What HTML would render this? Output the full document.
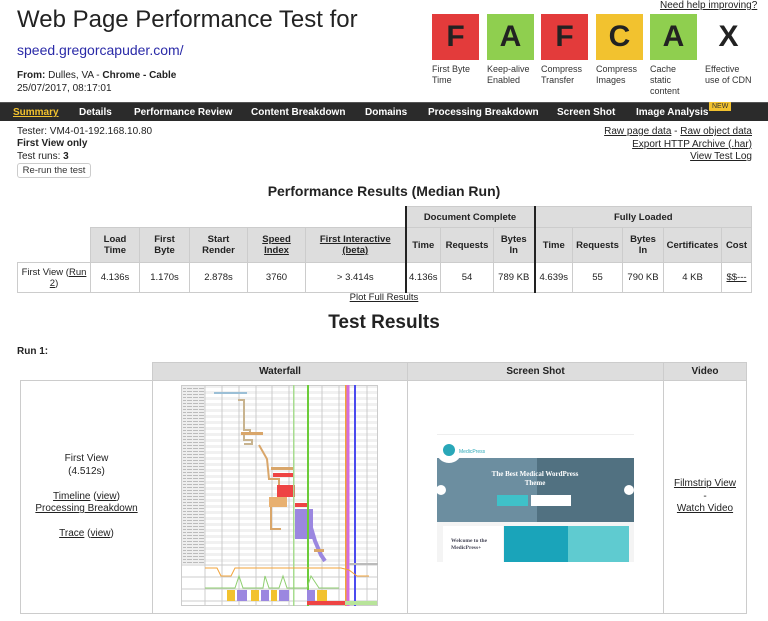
<!DOCTYPE html>
<html><head><meta charset="utf-8"><style>
*{margin:0;padding:0;box-sizing:border-box}
body{width:768px;height:621px;background:#fff;font-family:"Liberation Sans",Arial,sans-serif;color:#222;position:relative;overflow:hidden;font-size:10px}
.a{position:absolute;white-space:nowrap}
u{text-decoration:underline}
.g{position:absolute;top:14px;width:47px;height:46px;font:bold 30px "Liberation Sans",sans-serif;color:#222;text-align:center;line-height:46px}
.gl{position:absolute;top:64px;font-size:9px;line-height:11px;color:#333}
.nav{position:absolute;left:0;top:102px;width:768px;height:19px;background:#2b2b2b;border-top:1px solid #555}
.nav span{position:absolute;top:4px;color:#fff;font-weight:bold;font-size:10px}
table{border-collapse:collapse;position:absolute}
.pt td{border:1px solid #ccc;text-align:center;font-size:9.5px;padding:0}
.pt .h{background:#ddd;font-weight:bold}
.rt td{border:1px solid #ccc;text-align:center;font-size:10px}
</style></head><body>
<div class="a" style="left:17px;top:6px;font-size:24px;color:#222">Web Page Performance Test for</div>
<div class="a" style="left:17px;top:42px;font-size:14px;color:#2a2aa8">speed.gregorcapuder.com/</div>
<div class="a" style="left:17px;top:70px;font-size:10px"><b>From:</b> Dulles, VA - <b>Chrome - Cable</b></div>
<div class="a" style="left:17px;top:83px;font-size:10px">25/07/2017, 08:17:01</div>
<div class="a" style="left:660px;top:0px;font-size:10px"><u>Need help improving?</u></div>
<div class="g" style="left:432px;background:#e33b3b">F</div>
<div class="g" style="left:487px;background:#8fcf4f">A</div>
<div class="g" style="left:541px;background:#e33b3b">F</div>
<div class="g" style="left:596px;background:#f2c22f">C</div>
<div class="g" style="left:650px;background:#8fcf4f">A</div>
<div class="g" style="left:705px">X</div>
<div class="gl" style="left:432px">First Byte<br>Time</div>
<div class="gl" style="left:487px">Keep-alive<br>Enabled</div>
<div class="gl" style="left:541px">Compress<br>Transfer</div>
<div class="gl" style="left:596px">Compress<br>Images</div>
<div class="gl" style="left:650px">Cache<br>static<br>content</div>
<div class="gl" style="left:705px">Effective<br>use of CDN</div>
<div class="nav">
<span style="left:13px;color:#f2c22f;text-decoration:underline">Summary</span>
<span style="left:79px">Details</span>
<span style="left:134px">Performance Review</span>
<span style="left:251px">Content Breakdown</span>
<span style="left:365px">Domains</span>
<span style="left:428px">Processing Breakdown</span>
<span style="left:557px">Screen Shot</span>
<span style="left:636px">Image Analysis</span>
<span style="left:709px;top:-1px;background:#f2c22f;color:#333;font-size:7px;padding:1px 3px;font-weight:normal">NEW</span>
</div>
<div class="a" style="left:17px;top:126px;font-size:10px">Tester: VM4-01-192.168.10.80</div>
<div class="a" style="left:17px;top:138px;font-size:10px;font-weight:bold">First View only</div>
<div class="a" style="left:17px;top:151px;font-size:10px">Test runs: <b>3</b></div>
<div class="a" style="left:17px;top:163px;width:74px;height:15px;border:1px solid #ccc;border-radius:3px;font-size:9.5px;text-align:center;line-height:13px;color:#333">Re-run the test</div>
<div class="a" style="right:16px;top:126px;font-size:10px;text-align:right;line-height:12.5px"><u>Raw page data</u> - <u>Raw object data</u><br><u>Export HTTP Archive (.har)</u><br><u>View Test Log</u></div>
<div class="a" style="left:0;width:768px;top:183px;text-align:center;font-size:14px;font-weight:bold">Performance Results (Median Run)</div>
<table class="pt" style="left:17px;top:206px;width:735px">
<tr style="height:21px"><td colspan="6" style="border:none;border-right:2px solid #222"></td><td colspan="3" class="h" style="border-right:2px solid #222">Document Complete</td><td colspan="5" class="h">Fully Loaded</td></tr>
<tr style="height:35px"><td style="width:73px;border-left:none;border-top:none;background:#fff"></td><td class="h" style="width:49px">Load<br>Time</td><td class="h" style="width:50px">First<br>Byte</td><td class="h" style="width:58px">Start<br>Render</td><td class="h" style="width:58px"><u>Speed<br>Index</u></td><td class="h" style="width:100px;border-right:2px solid #222"><u>First Interactive<br>(beta)</u></td><td class="h" style="width:35px">Time</td><td class="h" style="width:53px">Requests</td><td class="h" style="width:41px;border-right:2px solid #222">Bytes<br>In</td><td class="h" style="width:38px">Time</td><td class="h" style="width:50px">Requests</td><td class="h" style="width:41px">Bytes<br>In</td><td class="h" style="width:58px">Certificates</td><td class="h">Cost</td></tr>
<tr style="height:30px"><td>First View (<u>Run<br>2</u>)</td><td>4.136s</td><td>1.170s</td><td>2.878s</td><td>3760</td><td style="border-right:2px solid #222">&gt; 3.414s</td><td>4.136s</td><td>54</td><td style="border-right:2px solid #222">789 KB</td><td>4.639s</td><td>55</td><td>790 KB</td><td>4 KB</td><td><u>$$---</u></td></tr>
</table>
<div class="a" style="left:0;width:768px;top:292px;text-align:center;font-size:9.5px"><u>Plot Full Results</u></div>
<div class="a" style="left:0;width:768px;top:312px;text-align:center;font-size:19px;font-weight:bold">Test Results</div>
<div class="a" style="left:17px;top:346px;font-size:10px;font-weight:bold">Run 1:</div>
<table class="rt" style="left:20px;top:362px;width:727px">
<tr style="height:18px"><td style="width:132px;border:none;border-bottom:1px solid #ccc"></td><td style="width:255px;background:#ddd;font-weight:bold">Waterfall</td><td style="width:256px;background:#ddd;font-weight:bold">Screen Shot</td><td style="background:#ddd;font-weight:bold">Video</td></tr>
<tr style="height:233px"><td style="line-height:12.5px">First View<br>(4.512s)<br><br><u>Timeline</u> (<u>view</u>)<br><u>Processing Breakdown</u><br><br><u>Trace</u> (<u>view</u>)</td><td></td><td></td><td style="line-height:12.5px"><u>Filmstrip View</u><br>-<br><u>Watch Video</u></td></tr>
</table>
<svg class="a" style="left:181px;top:385px" width="197" height="221" viewBox="0 0 197 221">
<defs><pattern id="rows" width="4" height="6" patternUnits="userSpaceOnUse"><rect width="4" height="3" fill="#f1f1f1"/></pattern>
<pattern id="txt" width="6" height="3" patternUnits="userSpaceOnUse"><rect width="5" height="1" fill="#bbb"/></pattern></defs>
<rect x="0.5" y="0.5" width="196" height="220" fill="#fff" stroke="#ccc"/>
<rect x="24" y="1" width="172" height="178" fill="url(#rows)"/>
<rect x="1" y="1" width="23" height="178" fill="#eee"/>
<rect x="2" y="2" width="21" height="176" fill="url(#txt)"/>
<g stroke="#ccc"><line x1="24" y1="0" x2="24" y2="221"/><line x1="41" y1="0" x2="41" y2="221"/><line x1="58" y1="0" x2="58" y2="221"/><line x1="75" y1="0" x2="75" y2="221"/><line x1="91" y1="0" x2="91" y2="221"/><line x1="108" y1="0" x2="108" y2="221"/><line x1="141" y1="0" x2="141" y2="221"/><line x1="158" y1="0" x2="158" y2="221"/><line x1="186" y1="0" x2="186" y2="221"/>
<line x1="0" y1="180" x2="197" y2="180"/><line x1="0" y1="192" x2="197" y2="192"/><line x1="0" y1="204" x2="197" y2="204"/><line x1="0" y1="216" x2="197" y2="216"/></g>
<rect x="33" y="7" width="33" height="2" fill="#9bbfd6"/>
<path d="M57 15h6v30h6v4h-6v6h8v4h-8" stroke="#c8b38e" stroke-width="2" fill="none"/>
<rect x="60" y="47" width="22" height="3" fill="#d9a66a"/>
<path d="M78 60l8 14 2 20h10v20h-8v30h10" stroke="#d9a66a" stroke-width="2" fill="none"/>
<rect x="90" y="82" width="23" height="3" fill="#d9a66a"/>
<rect x="92" y="88" width="21" height="4" fill="#e44"/>
<rect x="96" y="100" width="18" height="12" fill="#e44"/>
<rect x="88" y="112" width="18" height="10" fill="#e8b070"/>
<rect x="114" y="118" width="12" height="4" fill="#e44"/>
<rect x="114" y="124" width="18" height="30" fill="#9b87e0"/>
<path d="M128 136l6 20 6 14 4 6" stroke="#9b87e0" stroke-width="4" fill="none"/>
<rect x="133" y="164" width="10" height="3" fill="#d9a66a"/>
<rect x="112" y="0" width="1.5" height="221" fill="#a7dc8f"/>
<rect x="126" y="0" width="2" height="221" fill="#6ccc3a"/>
<rect x="164" y="0" width="1.5" height="221" fill="#f2a33a"/>
<rect x="165.5" y="0" width="3" height="221" fill="#d46de0"/>
<rect x="173" y="0" width="2" height="221" fill="#4b4bef"/>
<rect x="168" y="178" width="29" height="2" fill="#bbb"/>
<path d="M24 183h12l4 8h10l4-8h46l60 0 8 2 8 6h12" stroke="#f2a33a" fill="none"/>
<path d="M24 203h30l4-12 4 12h20l2-12 4 12h10l4-12 4 12h20l4-12 8 12h20" stroke="#8fcf70" fill="none"/>
<g fill="#9b87e0"><rect x="56" y="205" width="10" height="11"/><rect x="80" y="205" width="8" height="11"/><rect x="98" y="205" width="10" height="11"/><rect x="126" y="205" width="8" height="11"/></g>
<g fill="#f2c22f"><rect x="46" y="205" width="8" height="11"/><rect x="70" y="205" width="8" height="11"/><rect x="90" y="205" width="6" height="11"/><rect x="136" y="205" width="10" height="11"/></g>
<rect x="126" y="216" width="38" height="4" fill="#e44"/><rect x="164" y="216" width="32" height="4" fill="#b8e49a"/>
</svg>
<svg class="a" style="left:437px;top:430px" width="197" height="132" viewBox="0 0 197 132">
<rect width="197" height="132" fill="#f4f4f4"/>
<rect width="197" height="28" fill="#fff"/>
<rect x="0" y="4" width="197" height="1" fill="#eee"/>
<rect x="0" y="28" width="197" height="64" fill="#6c8ea0"/>
<rect x="100" y="28" width="97" height="64" fill="#3f5d6d" opacity=".6"/>
<circle cx="12" cy="20" r="13" fill="#fff"/><circle cx="12" cy="20" r="6" fill="#29a7b8"/>
<text x="22" y="23" font-size="5" fill="#29a7b8" font-family="Liberation Sans">MedicPress</text>
<text x="98" y="46" font-size="7" font-weight="bold" fill="#fff" text-anchor="middle" font-family="Liberation Serif">The Best Medical WordPress</text>
<text x="98" y="55" font-size="7" font-weight="bold" fill="#fff" text-anchor="middle" font-family="Liberation Serif">Theme</text>
<rect x="60" y="65" width="31" height="11" fill="#3fc1c9"/><rect x="94" y="65" width="40" height="11" fill="#fff"/>
<circle cx="4" cy="60" r="5" fill="#fff"/><circle cx="192" cy="60" r="5" fill="#fff"/>
<rect x="6" y="96" width="60" height="36" fill="#fff"/>
<text x="14" y="112" font-size="5.5" font-weight="bold" fill="#445" font-family="Liberation Serif">Welcome to the</text>
<text x="14" y="119" font-size="5.5" font-weight="bold" fill="#445" font-family="Liberation Serif">MedicPress+</text>
<rect x="67" y="96" width="64" height="36" fill="#1aa4ba"/>
<rect x="131" y="96" width="61" height="36" fill="#5fcbd0"/>
</svg>
</body></html>
